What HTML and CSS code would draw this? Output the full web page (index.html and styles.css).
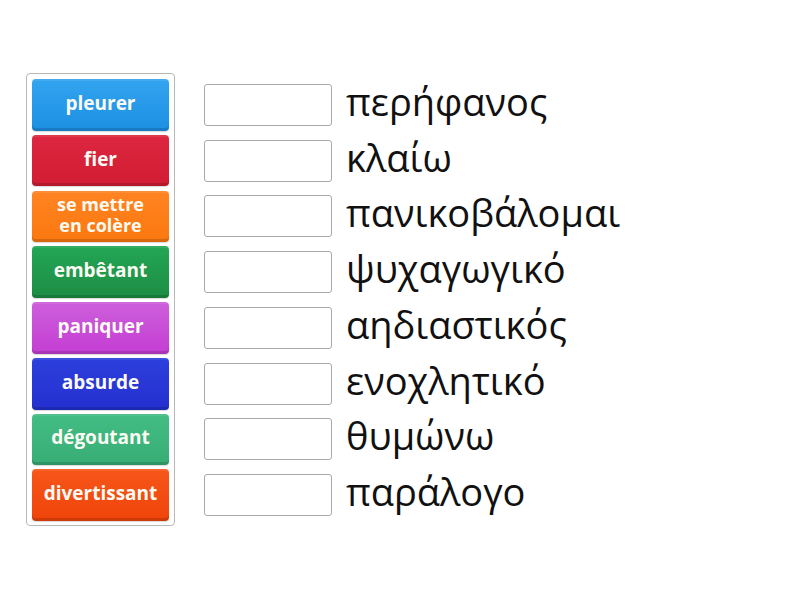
FILE: index.html
```html
<!DOCTYPE html>
<html>
<head>
	<meta charset="utf-8" />
	<title>Match up</title>
	<link rel="stylesheet" href="styles.css">
</head>
<body>
	<div class="board">
		<div class="tiles">
			<div class="tile blue">pleurer</div>
			<div class="tile red">fier</div>
			<div class="tile orange small">se mettre<br>en colère</div>
			<div class="tile green">embêtant</div>
			<div class="tile pink">paniquer</div>
			<div class="tile navy">absurde</div>
			<div class="tile mint">dégoutant</div>
			<div class="tile flame">divertissant</div>
		</div>
		<div class="targets">
			<div class="row"><div class="slot"></div><span class="word">περήφανος</span></div>
			<div class="row"><div class="slot"></div><span class="word">κλαίω</span></div>
			<div class="row"><div class="slot"></div><span class="word">πανικοβάλομαι</span></div>
			<div class="row"><div class="slot"></div><span class="word">ψυχαγωγικό</span></div>
			<div class="row"><div class="slot"></div><span class="word">αηδιαστικός</span></div>
			<div class="row"><div class="slot"></div><span class="word">ενοχλητικό</span></div>
			<div class="row"><div class="slot"></div><span class="word">θυμώνω</span></div>
			<div class="row"><div class="slot"></div><span class="word">παράλογο</span></div>
		</div>
	</div>
</body>
</html>
```
FILE: styles.css
```css
body {
	font-family: "Open Sans", sans-serif;
	background-color: #fff;
	margin: 0;
	padding: 0;
}

.board {
	display: flex;
	align-items: flex-start;
	gap: 29px;
	padding: 73px 0 0 26px;
}

/* Column of draggable tiles */
.tiles {
	display: flex;
	flex-direction: column;
	gap: 4.2px;
	padding: 5px 5px 4px 5px;
	border: 1px solid #b8b8b8;
	border-radius: 4px;
}

.tile {
	width: 137px;
	height: 51.6px;
	display: flex;
	align-items: center;
	justify-content: center;
	text-align: center;
	color: #fbfbf3;
	font-weight: bold;
	font-size: 19px;
	line-height: 24px;
	padding-bottom: 4px;
	border-radius: 4px;
	box-sizing: border-box;
	box-shadow: inset 0 -3px 0 rgba(0, 0, 0, 0.14), inset 0 2px 0 rgba(255, 255, 255, 0.08), 0 1px 1px rgba(0, 0, 0, 0.15);
}

.tile.small {
	font-size: 18px;
	line-height: 21px;
	padding-bottom: 3px;
}

.blue { background: linear-gradient(#33a4ef, #1d8fe3); }
.red { background: linear-gradient(#dd2740, #d21c33); }
.orange { background: linear-gradient(#ff8422, #fb780f); }
.green { background: linear-gradient(#23a655, #1d8d44); }
.pink { background: linear-gradient(#cd5fdb, #c43dd3); }
.navy { background: linear-gradient(#2c3fdc, #2430cf); }
.mint { background: linear-gradient(#43bd84, #37ad74); }
.flame { background: linear-gradient(#f7561a, #ef440a); }

/* Drop targets with their words */
.targets {
	display: flex;
	flex-direction: column;
	gap: 4.2px;
	padding-top: 6px;
}

.row {
	height: 51.6px;
	display: flex;
	align-items: center;
	gap: 14px;
}

.slot {
	width: 128px;
	height: 42px;
	border: 1px solid #a9a9a9;
	border-radius: 3px;
	box-sizing: border-box;
	background-color: #fff;
}

.word {
	font-size: 38px;
	line-height: 44px;
	color: #111;
	white-space: nowrap;
	margin-top: -8px;
}
```
